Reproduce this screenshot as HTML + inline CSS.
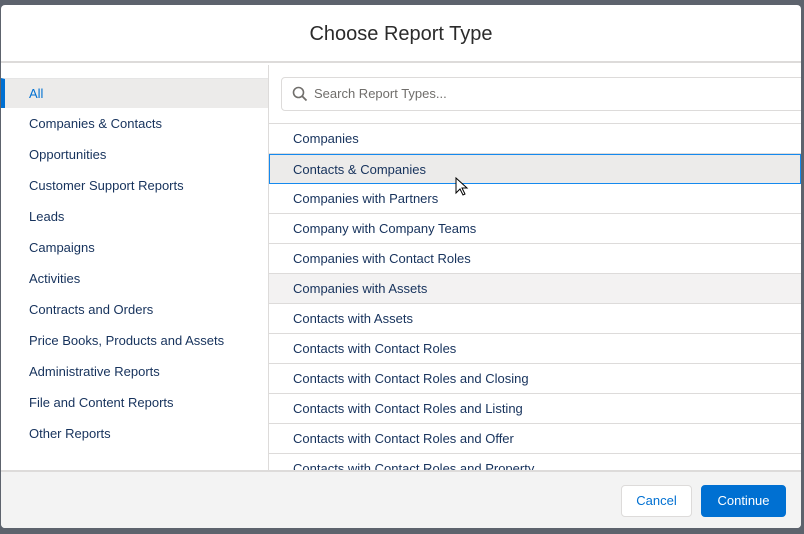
<!DOCTYPE html>
<html><head><style>
*{box-sizing:border-box;margin:0;padding:0}
body{width:804px;height:534px;background:#5d636d;font-family:"Liberation Sans",sans-serif;position:relative;overflow:hidden;color:#16325c}
.modal{position:absolute;left:1px;top:5px;width:800px;height:523px;background:#fff;border-radius:4px;overflow:hidden}
.hdr{height:58px;border-bottom:2px solid #dddbda;text-align:center;font-size:20px;line-height:58px;color:#2b2b2b;font-weight:normal}
.left{position:absolute;left:0;top:60px;width:268px;height:405px;border-right:1px solid #dddbda}
.left div{height:31px;line-height:31px;padding-left:28px;font-size:13px}
.left .sel{background:#ecebea;color:#0070d2;border-left:4px solid #0070d2;padding-left:24px;margin-top:13px;height:30px;line-height:29px;border-top:1px solid #e5e5e5}
.right{position:absolute;left:268px;top:60px;width:532px;height:405px;overflow:hidden}
.search{position:absolute;left:12px;top:12px;width:530px;height:34px;border:1px solid #dddbda;border-radius:4px;font-size:13px;color:#706e6b;line-height:32px;padding-left:32px}
.search svg{position:absolute;left:10px;top:8px}
.list{position:absolute;left:0;top:58px;width:532px;border-top:1px solid #dddbda}
.list div{height:30px;line-height:29px;border-bottom:1px solid #dddbda;padding-left:24px;font-size:13px}
.list .s{background:#ecebea;border:1px solid #1589ee;padding-left:23px}
.list .g{background:#f3f2f2}
.ftr{position:absolute;left:0;top:465px;width:800px;height:58px;background:#f3f3f3;border-top:2px solid #dddbda}
.btn{position:absolute;top:13px;height:32px;border-radius:4px;font-size:13px;line-height:30px;text-align:center}
</style></head><body>
<div class="modal">
<div class="hdr">Choose Report Type</div>
<div class="left">
<div class="sel">All</div>
<div>Companies &amp; Contacts</div><div>Opportunities</div><div>Customer Support Reports</div><div>Leads</div><div>Campaigns</div><div>Activities</div><div>Contracts and Orders</div><div>Price Books, Products and Assets</div><div>Administrative Reports</div><div>File and Content Reports</div><div>Other Reports</div>
</div>
<div class="right">
<div class="search"><svg width="16" height="16" viewBox="0 0 16 16"><circle cx="6.5" cy="6.5" r="5" fill="none" stroke="#706e6b" stroke-width="1.6"/><path d="M10 10l4.5 4.5" stroke="#706e6b" stroke-width="1.8"/></svg>Search Report Types...</div>
<div class="list">
<div>Companies</div><div class="s">Contacts &amp; Companies</div><div>Companies with Partners</div><div>Company with Company Teams</div><div>Companies with Contact Roles</div><div class="g">Companies with Assets</div><div>Contacts with Assets</div><div>Contacts with Contact Roles</div><div>Contacts with Contact Roles and Closing</div><div>Contacts with Contact Roles and Listing</div><div>Contacts with Contact Roles and Offer</div><div>Contacts with Contact Roles and Property</div>
</div>
<svg style="position:absolute;left:186px;top:112px" width="14" height="20" viewBox="0 0 14 20"><path d="M1 1v15l4-4 3 6 2-1-3-6h5z" fill="#fff" stroke="#000" stroke-width="1"/></svg>
</div>
<div class="ftr">
<div class="btn" style="left:620px;width:71px;background:#fff;border:1px solid #dddbda;color:#0070d2">Cancel</div>
<div class="btn" style="left:700px;width:85px;background:#0070d2;color:#fff;border:1px solid #0070d2">Continue</div>
</div>
</div>
</body></html>
